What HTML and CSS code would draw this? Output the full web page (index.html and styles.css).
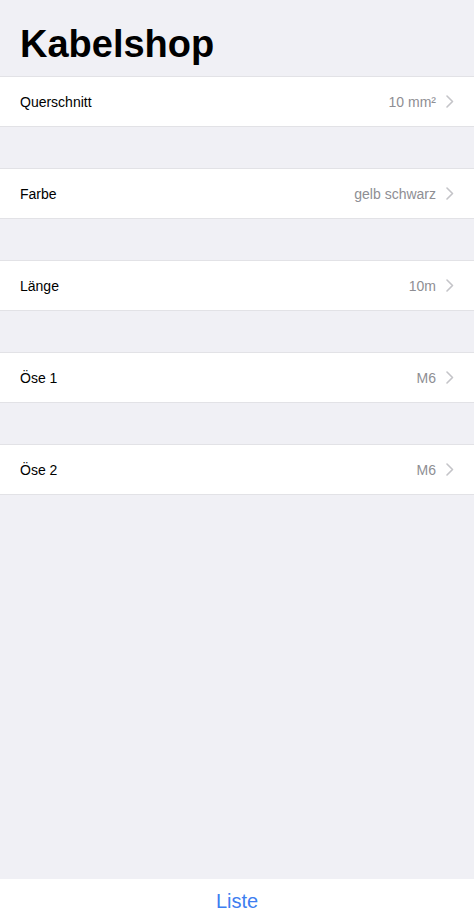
FILE: index.html
```html
<!DOCTYPE html>
<html lang="de">
<head>
<meta charset="utf-8">
<title>Kabelshop</title>
<link rel="stylesheet" href="styles.css">
</head>
<body>
<div class="page">
  <header class="header"><h1 class="title">Kabelshop</h1></header>
  <main class="list">
    <div class="row"><span class="label">Querschnitt</span><span class="value">10 mm²</span><svg class="chev" viewBox="0 0 8 13"><path d="M1 1 L6.5 6.5 L1 12" fill="none" stroke="#c4c4c8" stroke-width="1.6" stroke-linecap="round" stroke-linejoin="round"/></svg></div>
    <div class="row"><span class="label">Farbe</span><span class="value">gelb schwarz</span><svg class="chev" viewBox="0 0 8 13"><path d="M1 1 L6.5 6.5 L1 12" fill="none" stroke="#c4c4c8" stroke-width="1.6" stroke-linecap="round" stroke-linejoin="round"/></svg></div>
    <div class="row"><span class="label">Länge</span><span class="value">10m</span><svg class="chev" viewBox="0 0 8 13"><path d="M1 1 L6.5 6.5 L1 12" fill="none" stroke="#c4c4c8" stroke-width="1.6" stroke-linecap="round" stroke-linejoin="round"/></svg></div>
    <div class="row"><span class="label">Öse 1</span><span class="value">M6</span><svg class="chev" viewBox="0 0 8 13"><path d="M1 1 L6.5 6.5 L1 12" fill="none" stroke="#c4c4c8" stroke-width="1.6" stroke-linecap="round" stroke-linejoin="round"/></svg></div>
    <div class="row"><span class="label">Öse 2</span><span class="value">M6</span><svg class="chev" viewBox="0 0 8 13"><path d="M1 1 L6.5 6.5 L1 12" fill="none" stroke="#c4c4c8" stroke-width="1.6" stroke-linecap="round" stroke-linejoin="round"/></svg></div>
  </main>
  <nav class="tabbar"><span class="tab">Liste</span></nav>
</div>
</body>
</html>
```
FILE: styles.css
```css
html, body {
  margin: 0;
  padding: 0;
}
body {
  background: #f0f0f5;
  font-family: "Liberation Sans", Arial, sans-serif;
  color: #000;
}
.page {
  display: flex;
  flex-direction: column;
  height: 921px;
}
.header {
  height: 76px;
  box-sizing: border-box;
  padding: 25px 0 0 20px;
}
.title {
  margin: 0;
  font-size: 38px;
  line-height: 1;
  font-weight: bold;
}
.list {
  flex: 1;
  display: flex;
  flex-direction: column;
  gap: 41px;
}
.row {
  height: 51px;
  box-sizing: border-box;
  background: #fff;
  border-top: 1px solid #e2e2e6;
  border-bottom: 1px solid #e2e2e6;
  display: flex;
  align-items: center;
  padding: 0 20px;
  font-size: 14px;
}
.label {
  flex: 1;
}
.value {
  color: #8e8e93;
}
.chev {
  width: 8px;
  height: 13px;
  margin-left: 10px;
}
.tabbar {
  height: 42px;
  box-sizing: border-box;
  background: #fff;
  display: flex;
  justify-content: center;
  align-items: center;
  padding-top: 3px;
}
.tab {
  font-size: 20px;
  color: #3d7ef0;
}
```
